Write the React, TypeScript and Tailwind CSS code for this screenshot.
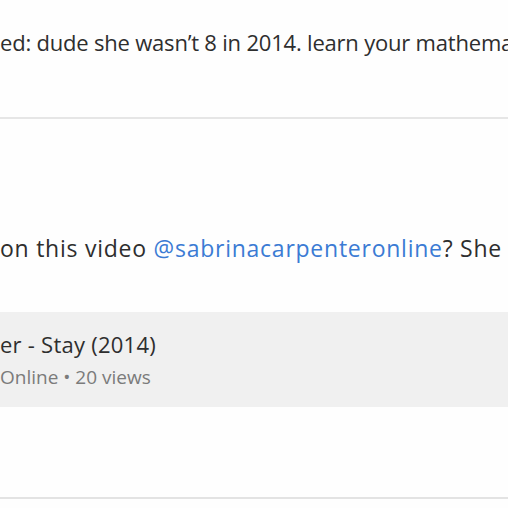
export default function App() {
  return (
    <div
      className="h-[508px] w-[508px] overflow-hidden bg-[#fefefe] text-[#2e2e2e]"
      style={{ fontFamily: '"Open Sans", "Noto Sans", sans-serif' }}
    >
      {/* reply line */}
      <section className="h-[117px] pt-[27px]">
        <p className="whitespace-nowrap text-[22px] leading-[30px] tracking-[-0.2px]">
          ed: dude she wasn’t 8 in 2014. learn your mathematics
        </p>
      </section>
      <div className="h-[2px] bg-[#e6e6e6]" />

      {/* post body + shared video */}
      <section className="flex h-[377px] flex-col">
        <p className="mt-[114px] whitespace-nowrap text-[23px] leading-[30px] tracking-[0.75px]">
          on this video <span className="text-[#3b7bd4]">@sabrinacarpenteronline</span>? She
        </p>
        <div className="mt-[49px] flex h-[95px] flex-col bg-[#f0f0f0] pt-[17px]">
          <p className="whitespace-nowrap text-[22px] leading-[30px] tracking-[0.25px]">
            er - Stay (2014)
          </p>
          <p className="mt-[4px] whitespace-nowrap text-[19px] leading-[28px] text-[#7b7b7b]">
            Online • 20 views
          </p>
        </div>
      </section>
      <div className="mt-[1px] h-[2px] bg-[#e3e3e3]" />
    </div>
  );
}
